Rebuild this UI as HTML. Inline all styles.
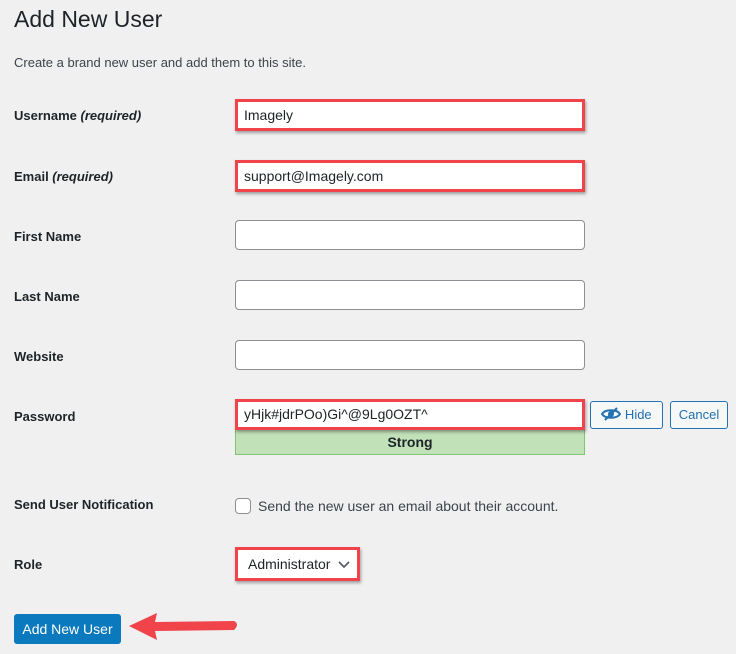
<!DOCTYPE html>
<html><head><style>
body{margin:0;width:736px;height:654px;background:#f0f0f1;font-family:"Liberation Sans",sans-serif;color:#1d2327;position:relative;overflow:hidden}
.a{position:absolute}
h1{position:absolute;left:14px;top:6px;margin:0;font-size:23px;font-weight:400}
.lbl{position:absolute;left:14px;font-size:13px;font-weight:bold;color:#1d2327}
.lbl i{font-weight:bold}
.in{position:absolute;left:235px;width:348px;height:28px;background:#fff;border:1px solid #8c8f94;border-radius:4px}
.red{position:absolute;left:235px;width:338px;height:26px;background:#fff;border:3px solid #f0434a;box-shadow:1px 2px 3px rgba(0,0,0,.35);font-size:14px;line-height:26px;padding-left:6px;box-sizing:content-box}
.btn{position:absolute;border:1px solid #2271b1;border-radius:3px;color:#2271b1;background:#f6f7f7;font-size:13px;line-height:26px;text-align:center;height:26px}
</style></head><body>
<h1>Add New User</h1>
<div class="a" style="left:14px;top:55px;font-size:13px;color:#3c434a">Create a brand new user and add them to this site.</div>

<div class="lbl" style="top:108px">Username <i>(required)</i></div>
<div class="red" style="top:99px">Imagely</div>
<div class="lbl" style="top:169px">Email <i>(required)</i></div>
<div class="red" style="top:160px">support@Imagely.com</div>
<div class="lbl" style="top:229px">First Name</div>
<div class="in" style="top:220px"></div>
<div class="lbl" style="top:289px">Last Name</div>
<div class="in" style="top:280px"></div>
<div class="lbl" style="top:349px">Website</div>
<div class="in" style="top:340px"></div>
<div class="lbl" style="top:409px">Password</div>
<div class="a" style="left:235px;top:429px;width:348px;height:24px;background:#c1e1b9;border:1px solid #83c373;text-align:center;font-size:14px;font-weight:bold;line-height:24px">Strong</div>
<div class="red" style="top:399px;height:25px;line-height:25px">yHjk#jdrPOo)Gi^@9Lg0OZT^</div>
<div class="btn" style="left:590px;top:401px;width:71px"><svg width="20" height="14" viewBox="0 0 20 14" style="vertical-align:-2px"><path d="M1 7C4 2 16 2 19 7C16 12 4 12 1 7Z" fill="none" stroke="#2271b1" stroke-width="2"/><circle cx="10" cy="7" r="3" fill="#2271b1"/><path d="M4 13L16 1" stroke="#2271b1" stroke-width="2"/></svg> Hide</div>
<div class="btn" style="left:670px;top:401px;width:56px">Cancel</div>

<div class="lbl" style="top:497px">Send User Notification</div>
<div class="a" style="left:235px;top:498px;width:14px;height:14px;border:1px solid #8c8f94;border-radius:4px;background:#fff"></div>
<div class="a" style="left:258px;top:498px;font-size:14px;color:#3c434a">Send the new user an email about their account.</div>

<div class="lbl" style="top:557px">Role</div>
<div class="a" style="left:235px;top:547px;font-size:14px;line-height:28px;padding-left:10px;box-sizing:border-box;width:125px;height:34px;border:3px solid #f0434a;background:#fff;box-shadow:1px 2px 3px rgba(0,0,0,.35)">Administrator <svg width="12" height="8" viewBox="0 0 12 8" style="margin-left:4px"><path d="M1 1L6 6L11 1" fill="none" stroke="#50575e" stroke-width="1.6"/></svg></div>

<div class="a" style="left:14px;top:614px;width:107px;height:30px;background:#0b79bd;border-radius:3px;color:#fff;font-size:14px;line-height:30px;text-align:center">Add New User</div>
<svg class="a" style="left:125px;top:610px" width="120" height="34" viewBox="0 0 120 34"><path d="M4 16L32 3L30 12L109 11Q115 14 109 20L30 21L32 30Z" fill="#f0434a"/></svg>
</body></html>
